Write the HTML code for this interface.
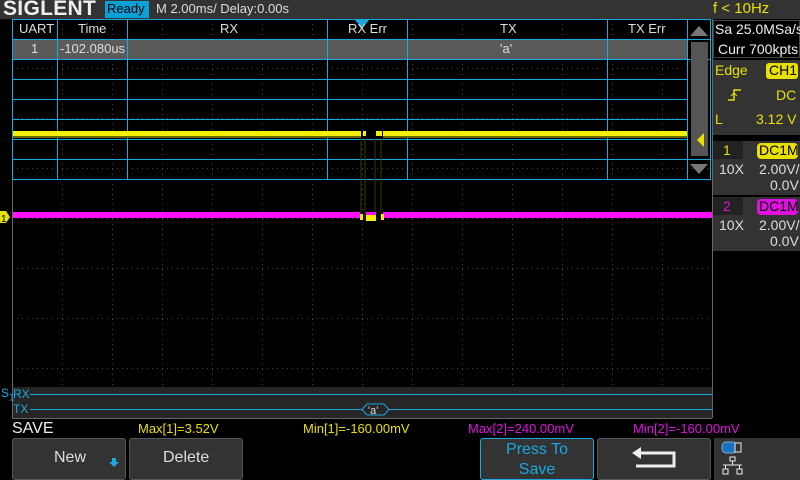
<!DOCTYPE html>
<html><head><style>
*{margin:0;padding:0;box-sizing:border-box}
body{width:800px;height:480px;background:#000;position:relative;overflow:hidden;font-family:"Liberation Sans","DejaVu Sans",sans-serif}
.a{position:absolute}
.t{position:absolute;white-space:nowrap}
</style></head><body>
<div class="a" style="left:0;top:0;width:800px;height:19px;background:#333"></div>
<div class="t" style="left:3px;top:-3px;font-size:21px;font-weight:bold;color:#eee;letter-spacing:0.3px">SIGLENT</div>
<div class="a" style="left:105px;top:1px;width:44px;height:17px;background:#0aa0d8"></div>
<div class="t" style="left:107px;top:1px;font-size:13px;color:#000">Ready</div>
<div class="t" style="left:156px;top:1px;font-size:13px;color:#ddd">M 2.00ms/ Delay:0.00s</div>
<div class="t" style="left:713px;top:0px;font-size:15px;color:#e8e000">f &lt; 10Hz</div>

<svg class="a" style="left:0;top:0" width="800" height="480" shape-rendering="crispEdges">
<g stroke="#444" stroke-width="1" stroke-dasharray="1,4">
<line x1="62.5" y1="19" x2="62.5" y2="387"/><line x1="112.5" y1="19" x2="112.5" y2="387"/><line x1="162.5" y1="19" x2="162.5" y2="387"/><line x1="212.5" y1="19" x2="212.5" y2="387"/><line x1="262.5" y1="19" x2="262.5" y2="387"/><line x1="312.5" y1="19" x2="312.5" y2="387"/><line x1="362.5" y1="19" x2="362.5" y2="387"/><line x1="412.5" y1="19" x2="412.5" y2="387"/><line x1="462.5" y1="19" x2="462.5" y2="387"/><line x1="512.5" y1="19" x2="512.5" y2="387"/><line x1="562.5" y1="19" x2="562.5" y2="387"/><line x1="612.5" y1="19" x2="612.5" y2="387"/><line x1="662.5" y1="19" x2="662.5" y2="387"/>
<line x1="12" y1="68.5" x2="712" y2="68.5"/><line x1="12" y1="118.5" x2="712" y2="118.5"/><line x1="12" y1="168.5" x2="712" y2="168.5"/><line x1="12" y1="218.5" x2="712" y2="218.5"/><line x1="12" y1="268.5" x2="712" y2="268.5"/><line x1="12" y1="318.5" x2="712" y2="318.5"/><line x1="12" y1="368.5" x2="712" y2="368.5"/>
</g>
<line x1="12.5" y1="19" x2="12.5" y2="418" stroke="#666"/>
<line x1="712.5" y1="19" x2="712.5" y2="418" stroke="#666"/>
<line x1="12" y1="418.5" x2="712" y2="418.5" stroke="#666"/>
<rect x="13" y="387" width="699" height="31" fill="#262626"/>
<line x1="30" y1="394.5" x2="712" y2="394.5" stroke="#1aa8e0"/>
<line x1="30" y1="409.5" x2="362" y2="409.5" stroke="#1aa8e0"/>
<line x1="388" y1="409.5" x2="712" y2="409.5" stroke="#1aa8e0"/>
<polygon points="362,409.5 367,404 384,404 389,409.5 384,415 367,415" fill="none" stroke="#1aa8e0" shape-rendering="auto"/>
<text x="368" y="414" font-size="11" fill="#ddd" font-family="Liberation Sans">'a'</text>
<rect x="13" y="40" width="674" height="19" fill="#5a5a5a"/>
<g stroke="#1aa8e0" stroke-width="1">
<line x1="12.5" y1="19" x2="12.5" y2="180"/>
<line x1="57.5" y1="19" x2="57.5" y2="180"/>
<line x1="127.5" y1="19" x2="127.5" y2="180"/>
<line x1="327.5" y1="19" x2="327.5" y2="180"/>
<line x1="407.5" y1="19" x2="407.5" y2="180"/>
<line x1="607.5" y1="19" x2="607.5" y2="180"/>
<line x1="687.5" y1="19" x2="687.5" y2="180"/>
<line x1="710.5" y1="19" x2="710.5" y2="180"/>
<line x1="12" y1="19.5" x2="711" y2="19.5"/>
<line x1="12" y1="39.5" x2="711" y2="39.5"/>
<line x1="12" y1="59.5" x2="711" y2="59.5"/>
<line x1="12" y1="79.5" x2="687" y2="79.5"/>
<line x1="12" y1="99.5" x2="687" y2="99.5"/>
<line x1="12" y1="119.5" x2="687" y2="119.5"/>
<line x1="12" y1="139.5" x2="687" y2="139.5"/>
<line x1="12" y1="159.5" x2="711" y2="159.5"/>
<line x1="12" y1="179.5" x2="711" y2="179.5"/>
</g>
<polygon points="690,36 699,26 708,36" fill="#777" shape-rendering="auto"/>
<rect x="691" y="42" width="17" height="114" fill="#555"/>
<polygon points="690,164 708,164 699,174" fill="#777" shape-rendering="auto"/>
<polygon points="354,19 370,19 362,28" fill="#1aa8e0" shape-rendering="auto"/>
<rect x="13" y="131" width="348" height="5" fill="#f5f000"/>
<rect x="13" y="136" width="348" height="2" fill="#6a6600"/>
<rect x="363" y="131" width="3" height="5" fill="#f5f000"/>
<rect x="376" y="131" width="6" height="5" fill="#f5f000"/>
<rect x="383" y="131" width="304" height="5" fill="#f5f000"/>
<rect x="383" y="136" width="304" height="2" fill="#6a6600"/>
<g stroke="#3a3a00"><line x1="361" y1="138" x2="361" y2="220"/><line x1="365" y1="138" x2="365" y2="220"/><line x1="375" y1="138" x2="375" y2="220"/><line x1="381" y1="138" x2="381" y2="220"/></g>
<polygon points="697,140 704,133 704,147" fill="#e8e000" shape-rendering="auto"/>
<rect x="13" y="212" width="347" height="6" fill="#ff10ff"/>
<rect x="383" y="212" width="329" height="6" fill="#ff10ff"/>
<rect x="366" y="212" width="10" height="6" fill="#ff10ff"/>
<rect x="360" y="214" width="3" height="6" fill="#f5f000"/>
<rect x="366" y="215" width="10" height="6" fill="#f5f000"/>
<rect x="381" y="214" width="3" height="6" fill="#f5f000"/>
<polygon points="0,211 6,211 10,217 6,223 0,223" fill="#e8e000" shape-rendering="auto"/>
<text x="1" y="222" font-size="10" fill="#000" font-family="Liberation Sans">1</text>
</svg>

<div class="t" style="left:19px;top:21px;font-size:13px;color:#ddd">UART</div>
<div class="t" style="left:78px;top:21px;font-size:13px;color:#ddd">Time</div>
<div class="t" style="left:220px;top:21px;font-size:13px;color:#ddd">RX</div>
<div class="t" style="left:348px;top:21px;font-size:13px;color:#ddd">RX Err</div>
<div class="t" style="left:500px;top:21px;font-size:13px;color:#ddd">TX</div>
<div class="t" style="left:628px;top:21px;font-size:13px;color:#ddd">TX Err</div>
<div class="t" style="left:31px;top:41px;font-size:13px;color:#ddd">1</div>
<div class="t" style="left:60px;top:41px;font-size:13px;color:#ddd">-102.080us</div>
<div class="t" style="left:500px;top:41px;font-size:13px;color:#ddd">'a'</div>
<div class="t" style="left:1px;top:386px;font-size:12px;color:#1aa8e0">S<sub style="font-size:10px">1</sub></div>
<div class="t" style="left:13px;top:387px;font-size:12px;color:#1aa8e0">RX</div>
<div class="t" style="left:13px;top:402px;font-size:12px;color:#1aa8e0">TX</div>

<div class="a" style="left:713px;top:20px;width:87px;height:38px;background:#000;border:1px solid #444"></div>
<div class="t" style="left:715px;top:21px;font-size:14px;color:#eee">Sa 25.0MSa/s</div>
<div class="t" style="left:718px;top:41px;font-size:14px;color:#eee">Curr 700kpts</div>
<div class="a" style="left:713px;top:60px;width:87px;height:75px;background:#333"></div>
<div class="t" style="left:715px;top:62px;font-size:14px;color:#e8e000">Edge</div>
<div class="a" style="left:766px;top:63px;width:32px;height:16px;background:#e8e000;border-radius:3px"></div>
<div class="t" style="left:769px;top:62px;font-size:14px;color:#000">CH1</div>
<svg class="a" style="left:727px;top:88px" width="16" height="14"><path d="M1 12 H7 V2 H14" stroke="#e8e000" stroke-width="1.5" fill="none"/><path d="M4 8 L7 5 L10 8" stroke="#e8e000" fill="none"/></svg>
<div class="t" style="left:776px;top:87px;font-size:14px;color:#e8e000">DC</div>
<div class="t" style="left:715px;top:111px;font-size:14px;color:#e8e000">L</div>
<div class="t" style="left:756px;top:111px;font-size:14px;color:#e8e000">3.12 V</div>
<div class="a" style="left:713px;top:141px;width:87px;height:54px;background:#333"></div>
<div class="a" style="left:713px;top:141px;width:30px;height:18px;background:#222"></div>
<div class="t" style="left:723px;top:142px;font-size:14px;color:#e8e000">1</div>
<div class="a" style="left:757px;top:143px;width:41px;height:16px;background:#e8e000;border-radius:4px"></div>
<div class="t" style="left:759px;top:142px;font-size:14px;color:#000">DC1M</div>
<div class="t" style="left:719px;top:161px;font-size:14px;color:#ddd">10X</div>
<div class="t" style="left:759px;top:161px;font-size:14px;color:#ddd">2.00V/</div>
<div class="t" style="left:770px;top:177px;font-size:14px;color:#ddd">0.0V</div>
<div class="a" style="left:713px;top:197px;width:87px;height:54px;background:#333"></div>
<div class="a" style="left:713px;top:197px;width:30px;height:18px;background:#222"></div>
<div class="t" style="left:723px;top:198px;font-size:14px;color:#e010e0">2</div>
<div class="a" style="left:757px;top:199px;width:41px;height:16px;background:#e010e0;border-radius:4px"></div>
<div class="t" style="left:759px;top:198px;font-size:14px;color:#000">DC1M</div>
<div class="t" style="left:719px;top:217px;font-size:14px;color:#ddd">10X</div>
<div class="t" style="left:759px;top:217px;font-size:14px;color:#ddd">2.00V/</div>
<div class="t" style="left:770px;top:233px;font-size:14px;color:#ddd">0.0V</div>

<div class="t" style="left:12px;top:420px;font-size:16px;color:#eee">SAVE</div>
<div class="t" style="left:138px;top:421px;font-size:13px;color:#e8e000">Max[1]=3.52V</div>
<div class="t" style="left:303px;top:421px;font-size:13px;color:#e8e000">Min[1]=-160.00mV</div>
<div class="t" style="left:468px;top:421px;font-size:13px;color:#e010e0">Max[2]=240.00mV</div>
<div class="t" style="left:633px;top:421px;font-size:13px;color:#e010e0">Min[2]=-160.00mV</div>

<div class="a" style="left:12px;top:438px;width:114px;height:42px;background:#333;border:1px solid #555;border-radius:3px"></div>
<div class="t" style="left:54px;top:449px;font-size:16px;color:#ddd">New</div>
<svg class="a" style="left:109px;top:458px" width="10" height="10"><path d="M3 0 H7 V4 H10 L5 9 L0 4 H3 Z" fill="#1aa8e0"/></svg>
<div class="a" style="left:129px;top:438px;width:114px;height:42px;background:#333;border:1px solid #555;border-radius:3px"></div>
<div class="t" style="left:163px;top:449px;font-size:16px;color:#ddd">Delete</div>
<div class="a" style="left:480px;top:438px;width:114px;height:42px;background:#333;border:1px solid #1aa8e0;border-radius:3px"></div>
<div class="t" style="left:501px;top:440px;font-size:16px;color:#1aa8e0;text-align:center;line-height:20px;width:72px">Press To<br>Save</div>
<div class="a" style="left:597px;top:438px;width:114px;height:42px;background:#333;border:1px solid #555;border-radius:3px"></div>
<svg class="a" style="left:630px;top:446px" width="50" height="26"><path d="M10 7 H44 V20 H6" stroke="#eee" stroke-width="3" fill="none"/><polygon points="2,7 11,1 11,13" fill="#eee"/></svg>
<div class="a" style="left:714px;top:438px;width:86px;height:42px;background:#333"></div>
<svg class="a" style="left:720px;top:441px" width="40" height="38"><rect x="2" y="1" width="15" height="11" rx="4" fill="#1a70c0" stroke="#7ac" /><rect x="15" y="2" width="6" height="9" fill="#333" stroke="#eee"/><g stroke="#eee" fill="none"><rect x="10" y="16" width="5" height="4"/><path d="M12.5 20 V24 M3 24 H22 M5.5 24 V28 M19.5 24 V28"/><rect x="3" y="28" width="5" height="5"/><rect x="17" y="28" width="5" height="5"/></g></svg>
</body></html>
